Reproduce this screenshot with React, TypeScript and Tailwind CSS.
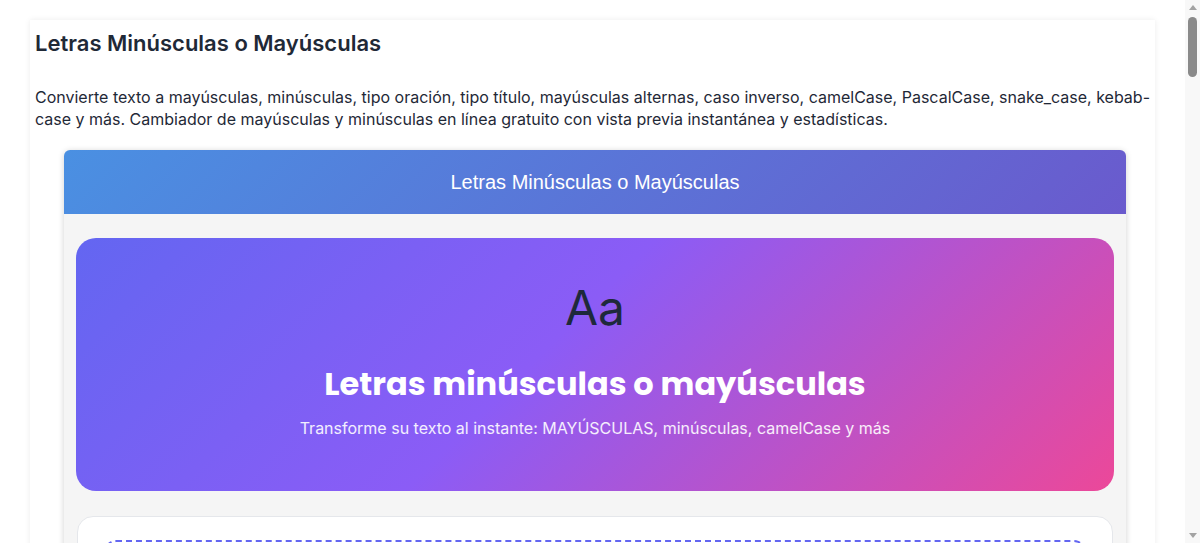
import React from "react";

export default function App() {
  return (
    <div className="min-h-[1400px] bg-white pr-[15px]" style={{ fontFamily: "Inter, 'Liberation Sans', sans-serif" }}>
      <div className="mx-[30px] mt-[20px] bg-white px-[5px] pt-[8px] pb-8 shadow-[0_0_6px_rgba(0,0,0,0.08)]">
        <h1 className="text-[22px] leading-[30px] font-semibold text-[#1f2937]">Letras Minúsculas o Mayúsculas</h1>
        <p className="mt-[28px] text-[16px] leading-[22px] text-[#1f2937]">
          Convierte texto a mayúsculas, minúsculas, tipo oración, tipo título, mayúsculas alternas, caso inverso, camelCase, PascalCase, snake_case, kebab-case y más. Cambiador de mayúsculas y minúsculas en línea gratuito con vista previa instantánea y estadísticas.
        </p>
        <div className="mt-[20px] ml-[29px] w-[1062px] overflow-hidden rounded-[6px] bg-[#f5f5f5] shadow-[0_1px_6px_rgba(0,0,0,0.18)]">
          <div
            className="flex h-[64px] items-center justify-center bg-[linear-gradient(135deg,#4a90e2,#6a5acd)] text-[20px] text-white"
            style={{ fontFamily: "'Liberation Sans', Arial, sans-serif" }}
          >
            Letras Minúsculas o Mayúsculas
          </div>
          <div className="px-[12px] pt-[24px] pb-6">
            <div className="flex h-[253px] flex-col items-center rounded-[20px] bg-[linear-gradient(135deg,#6366f1_0%,#8b5cf6_45%,#ec4899_100%)] pt-[44px] text-center">
              <div className="text-[48px] leading-[52px] text-[#1e293b]">Aa</div>
              <h2
                className="mt-[30px] text-[32px] leading-[40px] font-bold text-white"
                style={{ fontFamily: "Poppins, 'Open Sans', sans-serif" }}
              >
                Letras minúsculas o mayúsculas
              </h2>
              <p className="mt-[13px] text-[16px] leading-[22px] text-white/90">
                Transforme su texto al instante: MAYÚSCULAS, minúsculas, camelCase y más
              </p>
            </div>
            <div className="mx-[1px] mt-[25px] h-[400px] rounded-[16px] border border-[#e5e7eb] bg-white px-[26px] pt-[23px]">
              <div className="h-[200px] rounded-[12px] border-2 border-dashed border-[#6366f1]" />
            </div>
          </div>
        </div>
      </div>
      <div className="fixed top-0 right-0 flex h-screen w-[15px] flex-col items-center bg-[#f8f8f8]">
        <div className="mt-[5px] h-0 w-0 border-x-[4px] border-b-[5px] border-x-transparent border-b-[#a3a3a3]" />
        <div className="mt-[7px] h-[60px] w-[9px] rounded-full bg-[#8a8a8a]" />
        <div className="flex-1" />
        <div className="mb-[5px] h-0 w-0 border-x-[4px] border-t-[5px] border-x-transparent border-t-[#a3a3a3]" />
      </div>
    </div>
  );
}
